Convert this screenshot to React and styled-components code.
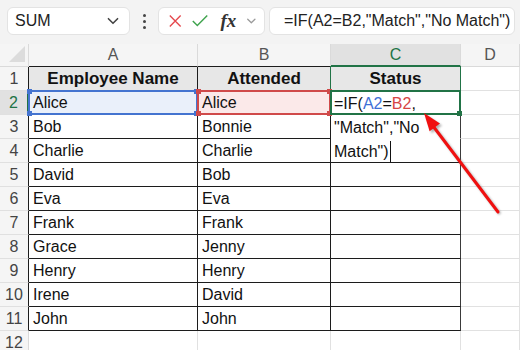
import React from "react";
import styled, { createGlobalStyle } from "styled-components";

const Global = createGlobalStyle`
  html, body { margin: 0; padding: 0; background: #ffffff; }
  body { font-family: "Liberation Sans", Arial, sans-serif; }
  * { box-sizing: border-box; }
`;

const Page = styled.div`
  position: relative;
  width: 520px;
  height: 350px;
  overflow: hidden;
  background: #ffffff;
`;

const Toolbar = styled.div`
  height: 44px;
  background: #f3f3f3;
  display: flex;
  align-items: flex-start;
  padding: 7px 5px 0 7px;
  gap: 0;
`;

const Box = styled.div`
  height: 28px;
  background: #ffffff;
  border: 1px solid #e3e3e3;
  border-radius: 6px;
  display: flex;
  align-items: center;
  width: ${(p) => (p.$w ? `${p.$w}px` : "auto")};
  flex: ${(p) => (p.$grow ? 1 : "none")};
  padding: ${(p) => p.$pad || "0 8px"};
  gap: ${(p) => p.$gap || "0"};
`;

const NameText = styled.span`
  font-size: 16px;
  color: #222;
  flex: 1;
`;

const Dots = styled.div`
  width: 28px;
  height: 28px;
  display: flex;
  flex-direction: column;
  align-items: center;
  justify-content: center;
  gap: 3px;
`;

const Dot = styled.span`
  width: 3px;
  height: 3px;
  border-radius: 50%;
  background: #444;
`;

const Fx = styled.span`
  font-family: "Liberation Serif", "Times New Roman", serif;
  font-style: italic;
  font-weight: bold;
  font-size: 19px;
  color: #333;
  margin-left: 2px;
`;

const FormulaText = styled.span`
  font-size: 16px;
  color: #222;
  white-space: nowrap;
`;

const Sheet = styled.div`
  position: relative;
  display: grid;
  grid-template-columns: 29px 169px 133px 130px 59px;
  grid-template-rows: 23px repeat(12, 24px);
`;

const ColHead = styled.div`
  background: ${(p) => (p.$active ? "#e1e1e1" : "#f5f5f5")};
  border-right: 1px solid #dadada;
  border-bottom: ${(p) => (p.$active ? "2px solid #217346" : `1px solid ${p.$dark ? "#1c1c1c" : "#dadada"}`)};
  color: ${(p) => (p.$active ? "#217346" : "#555")};
  font-size: 16px;
  display: flex;
  align-items: center;
  justify-content: center;
  position: relative;
`;

const Corner = styled.div`
  position: absolute;
  right: 3px;
  bottom: 4px;
  width: 0;
  height: 0;
  border-left: 16px solid transparent;
  border-bottom: 16px solid #dcdcdc;
`;

const RowHead = styled.div`
  background: ${(p) => (p.$active ? "#e1e1e1" : "#f5f5f5")};
  border-right: ${(p) => (p.$active ? "2px solid #217346" : `1px solid ${p.$dark ? "#1c1c1c" : "#dadada"}`)};
  border-bottom: 1px solid #e0e0e0;
  color: ${(p) => (p.$active ? "#217346" : "#444")};
  font-size: 16px;
  display: flex;
  align-items: center;
  justify-content: center;
`;

const Cell = styled.div`
  position: relative;
  background: ${(p) => p.$bg || "#ffffff"};
  border-right: 1px solid ${(p) => p.$rc || "#e1e1e1"};
  border-bottom: ${(p) => (p.$noBottom ? "1px solid #ffffff" : `1px solid ${p.$bc || "#e1e1e1"}`)};
  font-size: 16px;
  font-weight: ${(p) => (p.$bold ? "bold" : "normal")};
  color: #111;
  display: flex;
  align-items: center;
  justify-content: ${(p) => (p.$center ? "center" : "flex-start")};
  padding: 1px 0 0 4px;
  white-space: nowrap;
`;

const HeaderCellText = styled.span`
  font-size: 17px;
  margin-left: -4px;
`;

const RangeFrame = styled.div`
  position: absolute;
  left: -1px;
  top: -1px;
  right: -1px;
  bottom: -1px;
  border: 2px solid ${(p) => p.$color};
  pointer-events: none;
  z-index: 2;
`;

const Handle = styled.span`
  position: absolute;
  width: 5px;
  height: 5px;
  background: ${(p) => p.$color};
  ${(p) => (p.$top ? "top: -3px;" : "bottom: -3px;")}
  ${(p) => (p.$left ? "left: -3px;" : "right: -3px;")}
`;

const GreenSide = styled.div`
  position: absolute;
  top: -1px;
  bottom: -1px;
  left: -1px;
  right: -1px;
  border-left: 1px solid #217346;
  border-right: 1px solid #217346;
  pointer-events: none;
`;

const EditText = styled.div`
  position: absolute;
  left: 3px;
  top: 0;
  z-index: 3;
  font-size: 16px;
  color: #111;
  line-height: 24px;
  padding-top: 1px;
`;

const EditLine = styled.div`
  display: block;
  white-space: nowrap;
`;

const RefA = styled.span`
  color: #3d6fd6;
`;

const RefB = styled.span`
  color: #d64545;
`;

const Caret = styled.span`
  display: inline-block;
  width: 1px;
  height: 21px;
  background: #111;
  vertical-align: -5px;
  margin-left: 1px;
`;

const ArrowLayer = styled.svg`
  position: absolute;
  left: 0;
  top: 0;
  pointer-events: none;
  z-index: 10;
`;

const colA = ["Employee Name", "Alice", "Bob", "Charlie", "David", "Eva", "Frank", "Grace", "Henry", "Irene", "John"];
const colB = ["Attended", "Alice", "Bonnie", "Charlie", "Bob", "Eva", "Frank", "Jenny", "Henry", "David", "John"];

const Chevron = ({ color = "#444", size = 14 }) => (
  <svg width={size} height={size} viewBox="0 0 14 14">
    <polyline points="3,5 7,9 11,5" fill="none" stroke={color} strokeWidth="1.4" strokeLinecap="round" strokeLinejoin="round" />
  </svg>
);

export default function App() {
  const rows = [];
  for (let r = 1; r <= 12; r++) {
    const inTable = r <= 11;
    const dark = "#1c1c1c";
    rows.push(
      <RowHead key={`rh${r}`} $active={r === 2} $dark={inTable}>
        {r}
      </RowHead>
    );
    // A
    const isHeader = r === 1;
    rows.push(
      <Cell
        key={`a${r}`}
        $bg={r === 1 ? "#e7e7e7" : r === 2 ? "#eaf0fa" : undefined}
        $rc={inTable ? dark : "#e1e1e1"}
        $bc={inTable ? dark : "#e1e1e1"}
        $bold={isHeader}
        $center={isHeader}
      >
        {isHeader ? <HeaderCellText>{colA[0]}</HeaderCellText> : inTable ? colA[r - 1] : ""}
        {r === 2 && (
          <RangeFrame $color="#4474d0">
            <Handle $color="#4474d0" $top $left />
            <Handle $color="#4474d0" $top />
            <Handle $color="#4474d0" $left />
            <Handle $color="#4474d0" />
          </RangeFrame>
        )}
      </Cell>
    );
    // B
    rows.push(
      <Cell
        key={`b${r}`}
        $bg={r === 1 ? "#e7e7e7" : r === 2 ? "#fbe9e9" : undefined}
        $rc={inTable ? dark : "#e1e1e1"}
        $bc={inTable ? dark : "#e1e1e1"}
        $bold={isHeader}
        $center={isHeader}
      >
        {isHeader ? <HeaderCellText>{colB[0]}</HeaderCellText> : inTable ? colB[r - 1] : ""}
        {r === 2 && (
          <RangeFrame $color="#d04a4a">
            <Handle $color="#d04a4a" $top $left />
            <Handle $color="#d04a4a" $top />
            <Handle $color="#d04a4a" $left />
            <Handle $color="#d04a4a" />
          </RangeFrame>
        )}
      </Cell>
    );
    // C
    rows.push(
      <Cell
        key={`c${r}`}
        $bg={r === 1 ? "#e7e7e7" : undefined}
        $rc={inTable ? "#3a3a3a" : "#e1e1e1"}
        $bc={inTable ? dark : "#e1e1e1"}
        $noBottom={r === 3 || r === 2 ? false : false}
        $bold={isHeader}
        $center={isHeader}
        style={r === 3 || r === 4 ? { borderBottomColor: r === 4 ? dark : "#ffffff" } : undefined}
      >
        {isHeader && <HeaderCellText>Status</HeaderCellText>}
        {isHeader && <GreenSide />}
        {r === 2 && (
          <>
            <RangeFrame $color="#217346">
              <Handle $color="#217346" />
            </RangeFrame>
            <EditText>
              <EditLine>
                =IF(<RefA>A2</RefA>=<RefB>B2</RefB>,
              </EditLine>
              <EditLine>"Match","No</EditLine>
              <EditLine>
                Match")<Caret />
              </EditLine>
            </EditText>
          </>
        )}
      </Cell>
    );
    // D
    rows.push(<Cell key={`d${r}`} />);
  }

  return (
    <Page>
      <Global />
      <Toolbar>
        <Box $w={123} $pad="0 8px 0 7px">
          <NameText>SUM</NameText>
          <Chevron color="#444" size={16} />
        </Box>
        <Dots>
          <Dot />
          <Dot />
          <Dot />
        </Dots>
        <Box $w={107} $pad="0 6px 0 9px" $gap="9px">
          <svg width="16" height="16" viewBox="0 0 16 16">
            <path d="M2 2 L14 14 M14 2 L2 14" stroke="#e5484d" strokeWidth="1.5" fill="none" />
          </svg>
          <svg width="20" height="16" viewBox="0 0 20 16">
            <polyline points="2,8 7,13 18,2" stroke="#3fa34d" strokeWidth="1.6" fill="none" />
          </svg>
          <Fx>fx</Fx>
          <Chevron color="#9a9a9a" size={14} />
        </Box>
        <Box $grow $pad="0 0 0 14px" style={{ marginLeft: 4 }}>
          <FormulaText>=IF(A2=B2,"Match","No Match")</FormulaText>
        </Box>
      </Toolbar>
      <Sheet>
        <ColHead>
          <Corner />
        </ColHead>
        <ColHead $dark>A</ColHead>
        <ColHead $dark>B</ColHead>
        <ColHead $active>C</ColHead>
        <ColHead>D</ColHead>
        {rows}
      </Sheet>
      <ArrowLayer width="520" height="350" viewBox="0 0 520 350">
        <defs>
          <filter id="sh" x="-20%" y="-20%" width="140%" height="140%">
            <feGaussianBlur stdDeviation="1.2" />
          </filter>
        </defs>
        <g transform="translate(2,2)" opacity="0.45" filter="url(#sh)">
          <line x1="498" y1="212" x2="433" y2="126" stroke="#555" strokeWidth="3" />
          <polygon points="424,113 440,123.5 429.6,131.3" fill="#555" />
        </g>
        <line x1="498" y1="212" x2="433" y2="126" stroke="#f01010" strokeWidth="3" strokeLinecap="round" />
        <polygon points="424,113 440,123.5 429.6,131.3" fill="#f01010" />
      </ArrowLayer>
    </Page>
  );
}
